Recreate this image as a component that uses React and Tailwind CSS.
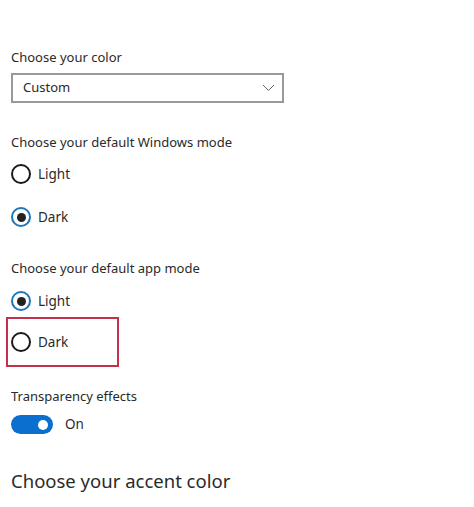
import React from "react";

function Radio({ checked, label }) {
  return (
    <div className="flex items-center h-[20px]">
      {checked ? (
        <div className="w-[20px] h-[20px] rounded-full border-2 border-[#1c76b8] flex items-center justify-center">
          <div className="w-[9px] h-[9px] rounded-full bg-[#222]" />
        </div>
      ) : (
        <div className="w-[20px] h-[20px] rounded-full border-2 border-[#1a1a1a]" />
      )}
      <span className="ml-[7px] text-[13.5px] text-[#2a2a2a]">{label}</span>
    </div>
  );
}

export default function App() {
  return (
    <div
      className="w-[474px] h-[507px] bg-white pl-[11px] pt-[48px] flex flex-col overflow-hidden"
      style={{ fontFamily: '"Noto Sans", "Open Sans", sans-serif' }}
    >
      <div className="h-[20px] flex items-center text-[13px] text-[#2a2a2a]">Choose your color</div>
      <div className="mt-[5px] w-[273px] h-[30px] border-2 border-[#999] flex items-center justify-between pl-[10px] pr-[7px]">
        <span className="text-[13px] text-[#2a2a2a]">Custom</span>
        <svg width="13" height="8" viewBox="0 0 13 8" fill="none">
          <path d="M1 1l5.5 5.5L12 1" stroke="#666" strokeWidth="1" />
        </svg>
      </div>

      <div className="mt-[30px] h-[20px] flex items-center text-[13px] text-[#2a2a2a]">Choose your default Windows mode</div>
      <div className="mt-[11px]"><Radio label="Light" /></div>
      <div className="mt-[23px]"><Radio checked label="Dark" /></div>

      <div className="mt-[32px] h-[20px] flex items-center text-[13px] text-[#2a2a2a]">Choose your default app mode</div>
      <div className="mt-[12px]"><Radio checked label="Light" /></div>
      <div className="mt-[6px] ml-[-5px] w-[113px] h-[50px] border-2 border-[#c4314b] flex items-center pl-[3px]">
        <Radio label="Dark" />
      </div>

      <div className="mt-[20px] h-[20px] flex items-center text-[13px] text-[#2a2a2a]">Transparency effects</div>
      <div className="mt-[8px] flex items-center h-[19px]">
        <div className="w-[42px] h-[19px] rounded-full bg-[#0a6fcf] flex items-center justify-end pr-[5px]">
          <div className="w-[10px] h-[10px] rounded-full bg-white" />
        </div>
        <span className="ml-[12px] text-[13.5px] text-[#2a2a2a]">On</span>
      </div>

      <div className="mt-[33px] h-[28px] flex items-center text-[18.5px] text-[#2a2a2a]">Choose your accent color</div>
    </div>
  );
}
